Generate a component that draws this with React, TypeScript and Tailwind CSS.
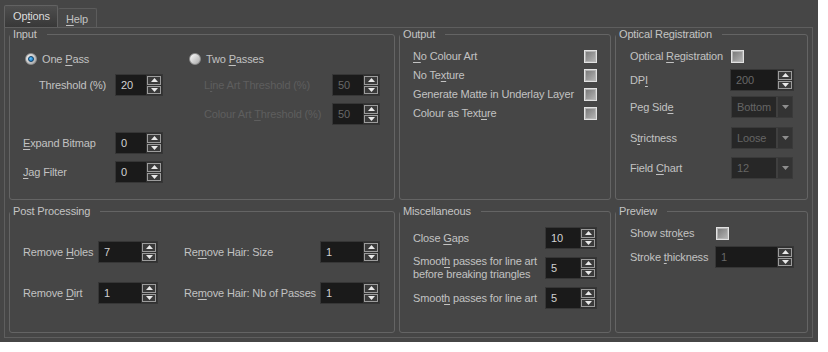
import type { ReactNode } from 'react';

// mnemonic label: "&" marks the underlined letter
function Mn({ text }: { text: string }) {
  const i = text.indexOf('&');
  if (i < 0) return <>{text}</>;
  return (
    <>
      {text.slice(0, i)}
      <span className="underline underline-offset-[2px]">{text[i + 1]}</span>
      {text.slice(i + 2)}
    </>
  );
}

function Group({ title, children }: { title: string; children: ReactNode }) {
  return (
    <fieldset className="min-w-0 rounded-[3px] border border-[#646464]">
      <legend className="pl-[3px] pr-[10px] text-[11px] leading-[13px] text-[#c4c4c4]">{title}</legend>
      {children}
    </fieldset>
  );
}

function Arrow({ up, color }: { up?: boolean; color: string }) {
  return (
    <svg width="7" height="4" viewBox="0 0 7 4">
      <polygon points={up ? '0,4 7,4 3.5,0' : '0,0 7,0 3.5,4'} fill={color} />
    </svg>
  );
}

function Spin({ value, width, disabled }: { value: string; width: string; disabled?: boolean }) {
  return (
    <div className={`flex h-[22px] shrink-0 border border-[#363636] bg-[#1a1a1a] ${width}`}>
      <div className={`flex flex-1 items-center pl-[5px] ${disabled ? 'text-[#686868]' : 'text-[#d2d2d2]'}`}>{value}</div>
      <div className="flex w-[16px] flex-col gap-[1px] bg-[#303030] p-[1px]">
        <div className="flex flex-1 items-center justify-center border border-[#9c9c9c] bg-[#3a3a3a]">
          <Arrow up color="#e8e8e8" />
        </div>
        <div className="flex flex-1 items-center justify-center border border-[#9c9c9c] bg-[#3a3a3a]">
          <Arrow color="#e8e8e8" />
        </div>
      </div>
    </div>
  );
}

function Combo({ value }: { value: string }) {
  return (
    <div className="flex h-[22px] w-[62px] shrink-0 border border-[#3a3a3a] bg-[#3f3f3f]">
      <div className="flex flex-1 items-center bg-[#272727] pl-[5px] text-[#656565]">{value}</div>
      <div className="ml-[2px] flex w-[14px] items-center justify-center bg-[#333333]">
        <Arrow color="#8e8e8e" />
      </div>
    </div>
  );
}

function Check() {
  return (
    <div className="h-[13px] w-[13px] shrink-0 border border-[#e2e2e2] bg-[#b4b4b4] p-[1px]">
      <div className="h-full w-full bg-linear-to-br from-[#7c7c7c] to-[#b2b2b2]" />
    </div>
  );
}

function Radio({ checked }: { checked?: boolean }) {
  if (checked) {
    return (
      <div className="flex h-[12px] w-[12px] shrink-0 items-center justify-center rounded-full border border-[#8c8c8c] bg-linear-to-br from-[#f0f0f0] to-[#a6a6a6]">
        <div className="h-[6px] w-[6px] rounded-full border border-[#0d3f66] bg-[radial-gradient(circle_at_35%_35%,#5cc0ff,#0f6cb8)]" />
      </div>
    );
  }
  return <div className="h-[12px] w-[12px] shrink-0 rounded-full border border-[#8c8c8c] bg-linear-to-br from-[#ffffff] to-[#a8a8a8]" />;
}

export default function App() {
  const off = 'text-[#5e5e5e]';
  return (
    <div className="h-[342px] w-[818px] bg-[#464646] font-['Liberation_Sans',Arial,sans-serif] text-[11px] leading-[13px] tracking-[-0.15px] text-[#c2c2c2]">
      {/* tabs */}
      <div className="ml-[4px] flex h-[27px] items-end pt-[5px]">
        <div className="flex h-[22px] w-[54px] items-start rounded-t-[2px] border border-b-0 border-[#626262] bg-linear-to-b from-[#4e4e4e] to-[#383838] pl-[8px] pt-[4px] text-[#dcdcdc]">
          <span>
            <Mn text="Op&tions" />
          </span>
        </div>
        <div className="flex h-[19px] w-[39px] items-start rounded-t-[2px] border border-b-0 border-l-0 border-[#5c5c5c] bg-[#484848] pl-[8px] pt-[4px]">
          <span>
            <Mn text="&Help" />
          </span>
        </div>
      </div>

      {/* pane */}
      <div className="ml-[4px] h-[311px] w-[809px] border border-[#5e5e5e] px-[4px] pb-[4px]">
        <div className="grid grid-cols-[386px_212px_193px] grid-rows-[172px_128px] gap-x-[4px] gap-y-[5px]">
          <Group title="Input">
            <div className="flex pt-[7px]">
              <div className="w-[179px]">
                <div className="flex h-[22px] items-center pl-[15px]">
                  <Radio checked />
                  <span className="ml-[5px]">
                    <Mn text="One &Pass" />
                  </span>
                </div>
                <div className="mt-[4px] flex h-[22px] items-center pl-[29px]">
                  <span className="w-[76px]">Threshold (%)</span>
                  <Spin value="20" width="w-[48px]" />
                </div>
                <div className="mt-[36px] flex h-[22px] items-center pl-[13px]">
                  <span className="w-[92px]">
                    <Mn text="&Expand Bitmap" />
                  </span>
                  <Spin value="0" width="w-[48px]" />
                </div>
                <div className="mt-[7px] flex h-[22px] items-center pl-[13px]">
                  <span className="w-[92px]">
                    <Mn text="&Jag Filter" />
                  </span>
                  <Spin value="0" width="w-[48px]" />
                </div>
              </div>
              <div>
                <div className="flex h-[22px] items-center">
                  <Radio />
                  <span className="ml-[5px]">
                    <Mn text="Two &Passes" />
                  </span>
                </div>
                <div className="mt-[4px] flex h-[22px] items-center pl-[15px]">
                  <span className={`w-[128px] ${off}`}>
                    <Mn text="L&ine Art Threshold (%)" />
                  </span>
                  <Spin value="50" width="w-[48px]" disabled />
                </div>
                <div className="mt-[7px] flex h-[22px] items-center pl-[15px]">
                  <span className={`w-[128px] ${off}`}>
                    <Mn text="Colour Art &Threshold (%)" />
                  </span>
                  <Spin value="50" width="w-[48px]" disabled />
                </div>
              </div>
            </div>
          </Group>

          <Group title="Output">
            <div className="pt-[6px]">
              {['&No Colour Art', 'No Te&xture', 'Generate Matte in Underlay Layer', 'Colour as Text&ure'].map((t) => (
                <div key={t} className="flex h-[19px] items-center justify-between pl-[13px] pr-[13px]">
                  <span>
                    <Mn text={t} />
                  </span>
                  <Check />
                </div>
              ))}
            </div>
          </Group>

          <Group title="Optical Registration">
            <div className="pl-[14px] pt-[6px]">
              <div className="flex h-[19px] items-center">
                <span className="w-[101px]">
                  <Mn text="Optical &Registration" />
                </span>
                <Check />
              </div>
              <div className="mt-[3px] flex h-[22px] items-center">
                <span className="w-[100px]">
                  <Mn text="DP&I" />
                </span>
                <Spin value="200" width="w-[64px]" disabled />
              </div>
              <div className="mt-[5px] flex h-[22px] items-center">
                <span className="w-[101px]">
                  <Mn text="Peg Sid&e" />
                </span>
                <Combo value="Bottom" />
              </div>
              <div className="mt-[9px] flex h-[22px] items-center">
                <span className="w-[101px]">
                  <Mn text="S&trictness" />
                </span>
                <Combo value="Loose" />
              </div>
              <div className="mt-[8px] flex h-[22px] items-center">
                <span className="w-[101px]">
                  <Mn text="Field &Chart" />
                </span>
                <Combo value="12" />
              </div>
            </div>
          </Group>

          <Group title="Post Processing">
            <div className="pl-[13px] pt-[23px]">
              <div className="flex h-[22px] items-center">
                <span className="w-[75px]">
                  <Mn text="Remove &Holes" />
                </span>
                <Spin value="7" width="w-[60px]" />
                <span className="ml-[26px] w-[136px]">
                  <Mn text="Re&move Hair: Size" />
                </span>
                <Spin value="1" width="w-[60px]" />
              </div>
              <div className="mt-[19px] flex h-[22px] items-center">
                <span className="w-[75px]">
                  <Mn text="Remove &Dirt" />
                </span>
                <Spin value="1" width="w-[60px]" />
                <span className="ml-[26px] w-[136px]">
                  <Mn text="Re&move Hair: Nb of Passes" />
                </span>
                <Spin value="1" width="w-[60px]" />
              </div>
            </div>
          </Group>

          <Group title="Miscellaneous">
            <div className="pl-[13px] pt-[9px]">
              <div className="flex h-[22px] items-center">
                <span className="w-[132px]">
                  <Mn text="Close &Gaps" />
                </span>
                <Spin value="10" width="w-[52px]" />
              </div>
              <div className="mt-[8px] flex h-[22px] items-center">
                <span className="w-[132px]">
                  <Mn text="Smoot&h passes for line art" />
                  <br />
                  before breaking triangles
                </span>
                <Spin value="5" width="w-[52px]" />
              </div>
              <div className="mt-[8px] flex h-[22px] items-center">
                <span className="w-[132px]">
                  <Mn text="Smoot&h passes for line art" />
                </span>
                <Spin value="5" width="w-[52px]" />
              </div>
            </div>
          </Group>

          <Group title="Preview">
            <div className="pl-[14px] pt-[6px]">
              <div className="flex h-[19px] items-center">
                <span className="w-[86px]">
                  <Mn text="Show stro&kes" />
                </span>
                <Check />
              </div>
              <div className="mt-[3px] flex h-[22px] items-center">
                <span className="w-[85px]">
                  <Mn text="Stroke &thickness" />
                </span>
                <Spin value="1" width="w-[79px]" disabled />
              </div>
            </div>
          </Group>
        </div>
      </div>
    </div>
  );
}
